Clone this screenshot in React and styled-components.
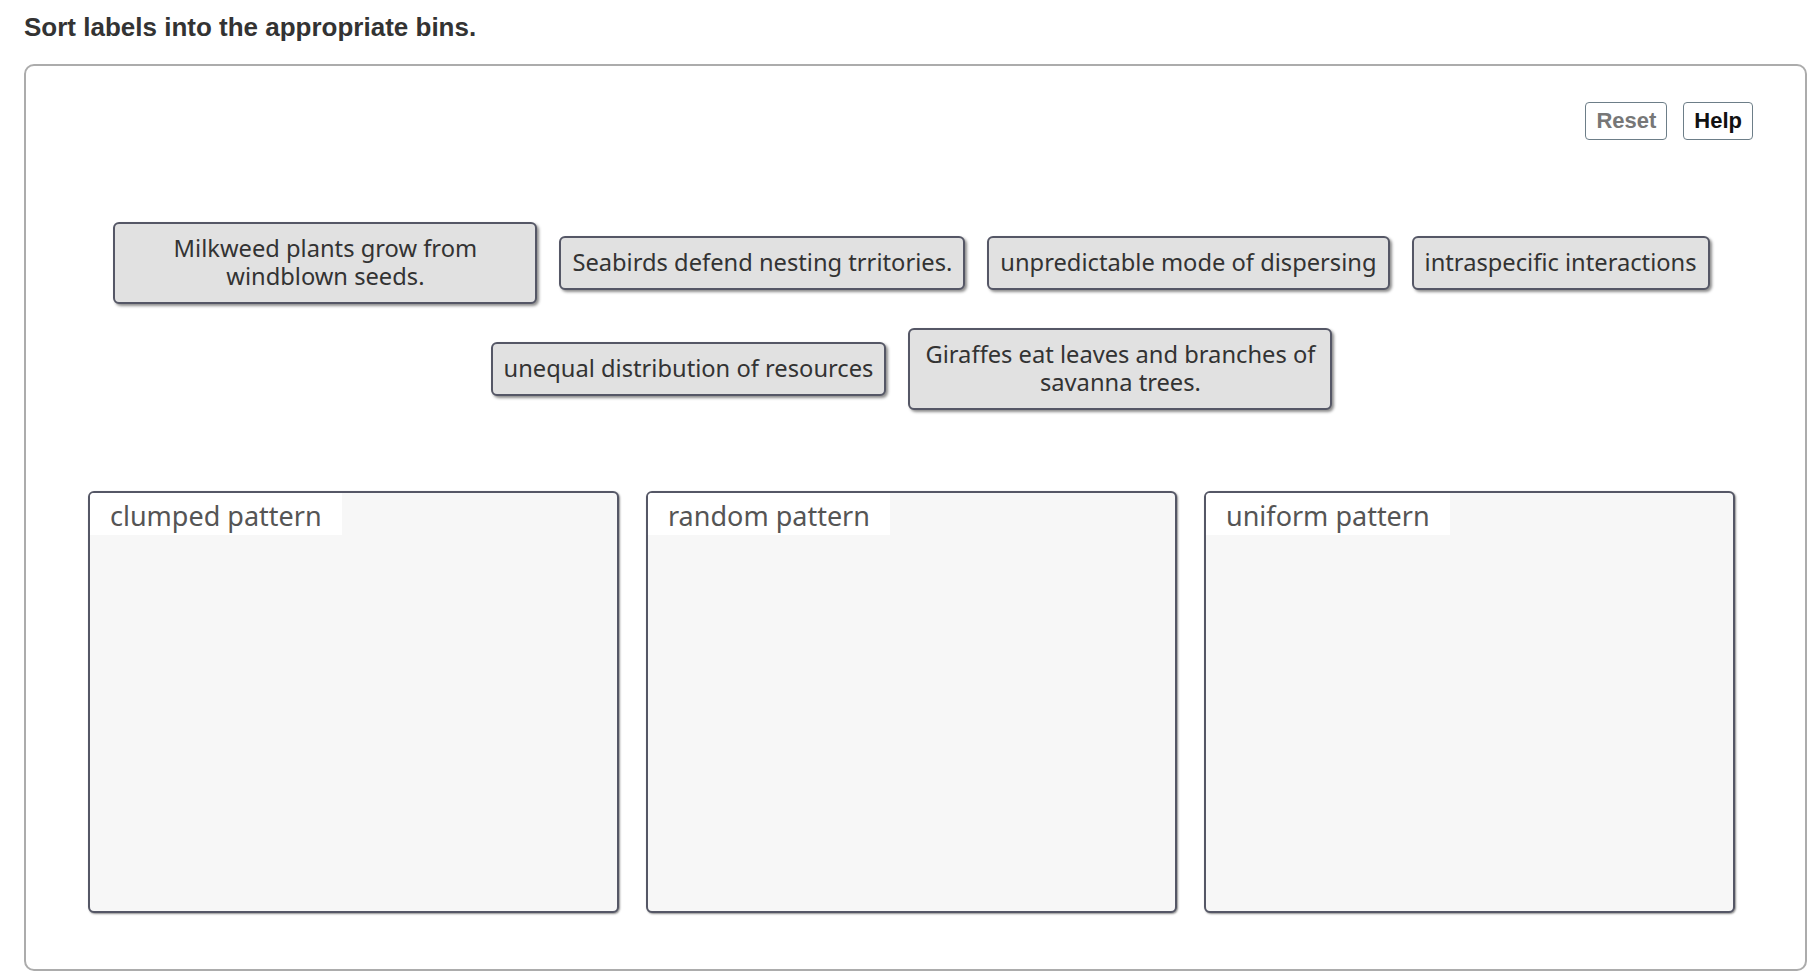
import React from 'react'
import styled, { createGlobalStyle } from 'styled-components'

const GlobalStyle = createGlobalStyle`
  html, body {
    margin: 0;
    padding: 0;
    background: #fff;
  }
  body {
    font-family: 'Noto Sans', 'Liberation Sans', Arial, sans-serif;
    color: #333;
  }
  * {
    box-sizing: border-box;
  }
`

const labels = [
  'Milkweed plants grow from windblown seeds.',
  'Seabirds defend nesting trritories.',
  'unpredictable mode of dispersing',
  'intraspecific interactions',
  'unequal distribution of resources',
  'Giraffes eat leaves and branches of savanna trees.',
]

const bins = ['clumped pattern', 'random pattern', 'uniform pattern']

const Page = styled.div`
  padding: 12px 9px 3px 24px;
`

const Title = styled.h1`
  margin: 0 0 22px;
  font-family: 'Liberation Sans', Arial, sans-serif;
  font-size: 26px;
  line-height: 30px;
  font-weight: 700;
  color: #333;
`

const Board = styled.div`
  border: 2px solid #acacac;
  border-radius: 10px;
  padding: 36px 0 56px;
`

const Toolbar = styled.div`
  display: flex;
  justify-content: flex-end;
  gap: 16px;
  padding-right: 52px;
`

const ToolButton = styled.button`
  height: 38px;
  padding: 0 10px;
  border: 1.5px solid #6d7e88;
  border-radius: 4px;
  background: #fff;
  font-family: 'Liberation Sans', Arial, sans-serif;
  font-size: 22px;
  font-weight: 700;
  color: ${p => (p.$muted ? '#777' : '#111')};
  cursor: pointer;
`

const LabelPool = styled.div`
  display: flex;
  flex-wrap: wrap;
  justify-content: center;
  align-items: center;
  gap: 24px 22px;
  margin-top: 82px;
  padding: 0 70px 0 62px;
`

const Label = styled.div`
  max-width: 424px;
  padding: 10px 11px 12px;
  border: 2px solid #555766;
  border-radius: 6px;
  background: #e1e1e1;
  box-shadow: 2px 2px 3px rgba(0, 0, 0, 0.45);
  font-size: 23.7px;
  line-height: 28px;
  color: #333;
  text-align: center;
`

const BinRow = styled.div`
  display: grid;
  grid-template-columns: repeat(3, 1fr);
  gap: 27px;
  margin-top: 81px;
  padding: 0 70px 0 62px;
`

const Bin = styled.div`
  height: 422px;
  border: 2px solid #555766;
  border-radius: 6px;
  background: #f7f7f7;
  box-shadow: 1px 1px 2px rgba(0, 0, 0, 0.45);
  overflow: hidden;
`

const BinTitle = styled.div`
  display: inline-block;
  height: 42px;
  padding: 3px 20px 0;
  background: #fff;
  font-size: 27px;
  line-height: 39px;
  color: #555;
`

export default function App() {
  return (
    <Page>
      <GlobalStyle />
      <Title>Sort labels into the appropriate bins.</Title>
      <Board>
        <Toolbar>
          <ToolButton $muted>Reset</ToolButton>
          <ToolButton>Help</ToolButton>
        </Toolbar>
        <LabelPool>
          {labels.map(text => (
            <Label key={text}>{text}</Label>
          ))}
        </LabelPool>
        <BinRow>
          {bins.map(name => (
            <Bin key={name}>
              <BinTitle>{name}</BinTitle>
            </Bin>
          ))}
        </BinRow>
      </Board>
    </Page>
  )
}
